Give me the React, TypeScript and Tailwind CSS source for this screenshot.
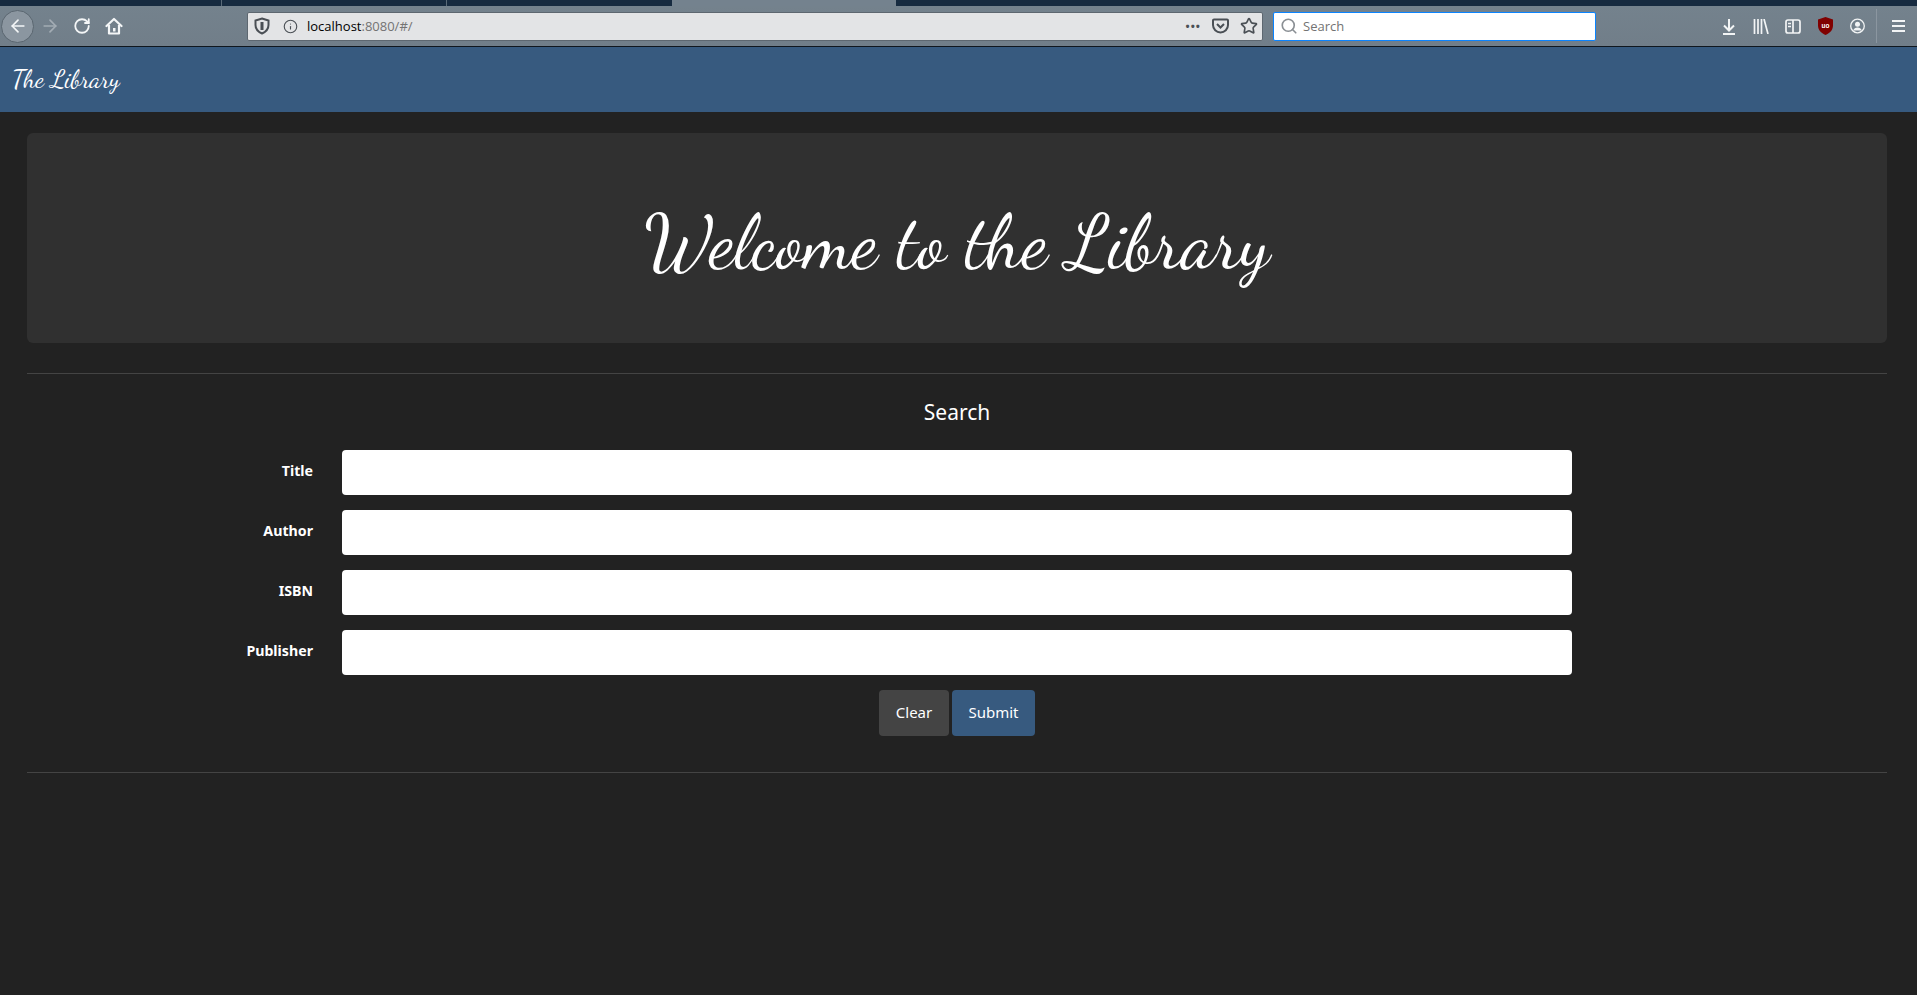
import React from 'react';
import { ArrowLeft, ArrowRight, RotateCw, Info, Star, Search } from 'lucide-react';

const fields = ['Title', 'Author', 'ISBN', 'Publisher'];

const Shield = () => (
  <svg width="16" height="18" viewBox="0 0 16 18" fill="none" stroke="#4a4f55" strokeWidth="2">
    <path d="M8 1.500 14.500 3.500V8c0 4-2.600 6.800-6.500 8.500C4.100 14.800 1.500 12 1.500 8V3.500Z" />
    <path d="M8 5v8" strokeWidth="3" />
  </svg>
);

const HomeIcon = () => (
  <svg width="18" height="18" viewBox="0 0 18 18" fill="none" stroke="#f4f6f7" strokeWidth="2.200" strokeLinejoin="round">
    <path d="M1.500 9 9 2l7.500 7" strokeLinecap="round" />
    <path d="M4 8v8.500h10V8" />
    <rect x="8" y="11" width="2.500" height="3.500" fill="#f4f6f7" stroke="none" />
  </svg>
);

const Pocket = () => (
  <svg width="17" height="16" viewBox="0 0 17 16" fill="none" stroke="#4a4f55" strokeWidth="2">
    <path d="M2 1.500h13a1 1 0 0 1 1 1V7a7.500 7.500 0 0 1-15 0V2.500a1 1 0 0 1 1-1Z" />
    <path d="m5 6 3.500 3.500L12 6" />
  </svg>
);

const DownloadIcon = () => (
  <svg width="14" height="17" viewBox="0 0 14 17" fill="none" stroke="#f2f4f5" strokeWidth="2">
    <path d="M7 1v11M2 7.500 7 12.500l5-5" />
    <path d="M1 16h12" />
  </svg>
);

const Library = () => (
  <svg width="16" height="15" viewBox="0 0 16 15" fill="none" stroke="#f2f4f5" strokeWidth="1.700">
    <path d="M1.500 0v15M5 0v15M8.500 0v15M11 0l4 15" />
  </svg>
);

const Sidebar = () => (
  <svg width="16" height="15" viewBox="0 0 16 15" fill="none" stroke="#f2f4f5" strokeWidth="1.700">
    <rect x="1" y="1" width="14" height="13" rx="2" />
    <path d="M8 1v13" />
    <path d="M3 4.500h3M3 7.500h3" />
  </svg>
);

const UBlock = () => (
  <svg width="15" height="18" viewBox="0 0 15 18">
    <path d="M7.500 0 15 2.500V8.500c0 4.500-3 7.500-7.500 9.500C3 16 0 13 0 8.500V2.500Z" fill="#800000" />
    <text x="7.500" y="11" textAnchor="middle" fontSize="6.500" fontWeight="700" fill="#fff" fontFamily="'Liberation Sans', sans-serif">
      uo
    </text>
  </svg>
);

const UserIcon = () => (
  <svg width="15" height="16" viewBox="0 0 15 16" fill="none" stroke="#f2f4f5" strokeWidth="1.300">
    <circle cx="7.500" cy="8" r="6.800" />
    <circle cx="7.500" cy="6.200" r="2.500" fill="#f2f4f5" stroke="none" />
    <path d="M3.200 12.500c.6-2 2.200-3 4.300-3s3.700 1 4.300 3" fill="#f2f4f5" stroke="none" />
  </svg>
);

const MenuIcon = () => (
  <svg width="13" height="14" viewBox="0 0 13 14" fill="none" stroke="#f2f4f5" strokeWidth="2">
    <path d="M0 2h13M0 7h13M0 12h13" />
  </svg>
);

const Slot: React.FC<{ children: React.ReactNode }> = ({ children }) => (
  <div className="w-[32px] flex items-center justify-center">{children}</div>
);

const BrowserChrome = () => (
  <div className="flex flex-col">
    <div className="flex h-[6px] bg-[#172b40]">
      <div className="w-[222px] border-r border-[#5a6a78]" />
      <div className="w-[225px] border-r border-[#5a6a78]" />
      <div className="w-[225px]" />
      <div className="w-[224px] bg-[#74828e]" />
    </div>
    <div className="h-[41px] flex items-center bg-gradient-to-b from-[#74828d] to-[#717e89] border-b border-[#10171e] font-['Open_Sans',sans-serif]">
      <div className="w-[33px] h-[33px] ml-px rounded-full bg-[#8b96a0] border border-[#5a6670] flex items-center justify-center">
        <ArrowLeft size={20} color="#f4f6f7" strokeWidth={2} />
      </div>
      <Slot><ArrowRight size={20} color="#a3acb4" strokeWidth={2} /></Slot>
      <Slot><RotateCw size={18} color="#f4f6f7" strokeWidth={2.400} /></Slot>
      <Slot><HomeIcon /></Slot>
      <div className="ml-[117px] w-[1016px] h-[29px] flex items-center bg-[#e3e4e6] border border-[#5d6770] rounded-[2px]">
        <div className="ml-[6px] flex"><Shield /></div>
        <Info size={15} color="#4a4f55" strokeWidth={1.800} className="ml-[13px]" />
        <div className="ml-[9px] pt-[2px] text-[13px] text-black">
          localhost<span className="text-[#737373]">:8080/#/</span>
        </div>
        <div className="ml-auto text-[#4a4f55] text-[11px] tracking-[1px] font-bold">•••</div>
        <div className="ml-[11px] flex"><Pocket /></div>
        <Star size={18} color="#4a4f55" strokeWidth={2.200} className="ml-[11px] mr-[4px]" />
      </div>
      <div className="ml-[10px] w-[323px] h-[29px] flex items-center bg-white border border-[#0a84ff] rounded-[2px]">
        <Search size={18} color="#8a8f94" strokeWidth={2.200} className="ml-[6px]" />
        <span className="ml-[5px] pt-[2px] text-[13px] text-[#737373]">Search</span>
      </div>
      <div className="ml-[117px] flex">
        <Slot><DownloadIcon /></Slot>
        <Slot><Library /></Slot>
        <Slot><Sidebar /></Slot>
        <Slot><UBlock /></Slot>
        <Slot><UserIcon /></Slot>
      </div>
      <div className="ml-[3px] w-px h-[34px] bg-[#8b96a0]" />
      <div className="ml-[15px] flex"><MenuIcon /></div>
    </div>
  </div>
);

const App: React.FC = () => {
  return (
    <div className="min-h-[995px] bg-[#222222] text-white font-['Noto_Sans',sans-serif]">
      <BrowserChrome />
      <nav className="h-[65px] bg-[#375a7f] flex items-center px-[12px]">
        <span className="font-['Dancing_Script',cursive] text-[25.500px]">The Library</span>
      </nav>
      <main className="pl-[27px] pr-[30px] pt-[21px]">
        <div className="h-[210px] pt-[10px] bg-[#303030] rounded-[6px] flex items-center justify-center">
          <h1 className="font-['Dancing_Script',cursive] text-[75px] leading-none">Welcome to the Library</h1>
        </div>
        <hr className="mt-[30px] border-[#444444]" />
        <h2 className="mt-[23px] text-center text-[21px] leading-[30px]">Search</h2>
        <form className="mt-[23px] flex flex-col gap-[15px]">
          {fields.map((field) => (
            <div key={field} className="flex items-center">
              <label className="w-[286px] pb-[4px] text-right font-bold text-[14.200px] mr-[29px]">{field}</label>
              <input type="text" className="w-[1230px] h-[45px] bg-white rounded-[4px]" />
            </div>
          ))}
          <div className="flex justify-center gap-[3px]">
            <button type="button" className="w-[70px] h-[46px] pb-[2px] bg-[#444444] rounded-[4px] text-[15px]">Clear</button>
            <button type="button" className="w-[83px] h-[46px] pb-[2px] bg-[#375a7f] rounded-[4px] text-[15px]">Submit</button>
          </div>
        </form>
        <hr className="mt-[36px] border-[#444444]" />
      </main>
    </div>
  );
};

export default App;
